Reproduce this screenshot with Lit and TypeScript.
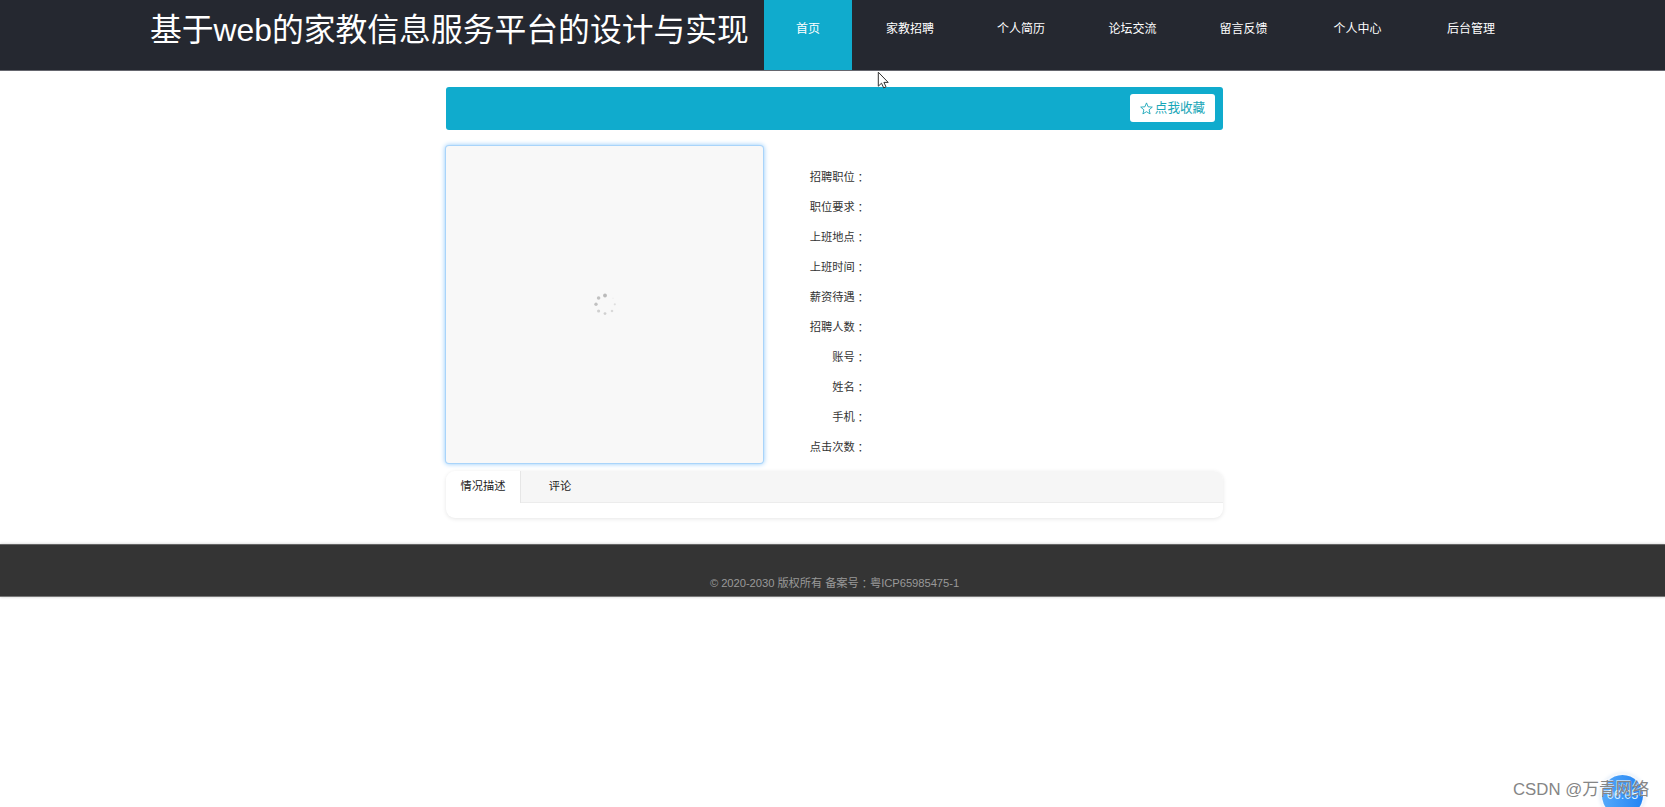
import { LitElement, html, css, svg } from "lit";
import { customElement } from "lit/decorators.js";
import { classMap } from "lit/directives/class-map.js";

const NAV = ["首页", "家教招聘", "个人简历", "论坛交流", "留言反馈", "个人中心", "后台管理"];
const FIELDS = ["招聘职位", "职位要求", "上班地点", "上班时间", "薪资待遇", "招聘人数", "账号", "姓名", "手机", "点击次数"];
// x, y, radius, opacity of each spinner dot
const DOTS: number[][] = [
  [12, 2.5, 1.9, 0.25], [5.6, 5, 1.8, 0.22], [3, 11.3, 1.7, 0.22], [5.6, 18, 1.6, 0.16],
  [12, 20.6, 1.4, 0.16], [19, 18, 1.3, 0.12], [21.8, 11.3, 1.1, 0.1], [20, 5.2, 0.8, 0.04],
];

@customElement("app-root")
export class AppRoot extends LitElement {
  static styles = css`
    :host {
      display: block;
      position: relative;
      height: 807px;
      overflow: hidden;
      background: #fff;
      color: #333;
      font-family: "Liberation Sans", "Noto Sans CJK SC", sans-serif;
      font-size: 11.25px;
    }
    * { box-sizing: border-box; }
    .header {
      display: flex;
      height: 71px;
      padding-left: 150px;
      background: #252830;
      border-bottom: 1px solid #65666e;
      color: #fff;
    }
    .title {
      width: 614px;
      font-size: 31.8px;
      line-height: 60px;
      white-space: nowrap;
    }
    .nav {
      display: grid;
      grid-template-columns: 88px 116px 106px 117px 105px 123px 104px;
      height: 70px;
      font-size: 12px;
      line-height: 58px;
      text-align: center;
    }
    .active { background: #10abcd; }
    .main { width: 777px; margin: 16px 0 0 446px; }
    .banner {
      display: flex;
      justify-content: flex-end;
      height: 43px;
      padding: 7px 8px 0 0;
      border-radius: 3px;
      background: #10abcd;
    }
    .fav {
      display: flex;
      align-items: center;
      justify-content: center;
      gap: 2px;
      width: 85px;
      height: 28px;
      border-radius: 3px;
      background: #fff;
      color: #18a6b8;
      font-size: 12.6px;
      line-height: 18px;
    }
    .detail { display: flex; margin-top: 16px; height: 317px; }
    .photo {
      display: flex;
      align-items: center;
      justify-content: center;
      width: 317px;
      height: 317px;
      border-radius: 3px;
      background: #f8f8f8;
      box-shadow: 0 0 0 1px #a9d4fa, 0 0 5px 1px #8fc8fa;
    }
    .fields { width: 103px; padding-top: 16px; text-align: right; }
    .row { height: 30px; line-height: 30px; white-space: nowrap; }
    .colon {
      display: inline-block;
      width: 11.25px;
      height: 11px;
      line-height: 13px;
      font-family: "Noto Sans CJK TC", sans-serif;
      vertical-align: -1px;
    }
    .card {
      height: 47px;
      margin-top: 8px;
      border-radius: 9px;
      overflow: hidden;
      background: #fff;
      box-shadow: 0 1px 4px rgba(0, 0, 0, 0.1);
    }
    .tabs {
      display: flex;
      height: 32px;
      line-height: 30px;
      background: #f6f6f6;
      border-bottom: 1px solid #ececec;
      color: #222;
      text-align: center;
    }
    .tab { width: 78px; }
    .current { width: 75px; height: 32px; background: #fff; border-right: 1px solid #e6e6e6; }
    .footer {
      height: 53px;
      margin-top: 26px;
      padding-top: 26px;
      padding-left: 4px;
      line-height: 25px;
      background: #343434;
      border-top: 1px solid #666;
      border-bottom: 1px solid #777;
      box-shadow: 0 0 3px rgba(0, 0, 0, 0.2);
      color: #999;
      letter-spacing: -0.07px;
      text-align: center;
    }
    .cursor { position: absolute; left: 877px; top: 71px; }
    .clock {
      position: absolute;
      left: 1602px;
      top: 775px;
      width: 41px;
      height: 41px;
      border-radius: 50%;
      background: linear-gradient(90deg, #54a9fa, #2384f3);
      box-shadow: 0 0 0 2px #f2f7fd, 0 0 4px 2px #dde8f5;
      color: #d9efff;
      font-size: 12.5px;
      line-height: 41px;
      text-align: center;
    }
    .mark {
      position: absolute;
      left: 1513px;
      top: 777px;
      font-size: 16.8px;
      line-height: 26px;
      white-space: nowrap;
      color: #858585;
      text-shadow: -1px -1px 0 rgba(255, 255, 255, 0.6);
    }
  `;

  render() {
    return html`
      <header class="header">
        <div class="title">基于web的家教信息服务平台的设计与实现</div>
        <nav class="nav">
          ${NAV.map((t, i) => html`<div class=${classMap({ active: i === 0 })}>${t}</div>`)}
        </nav>
      </header>
      <main class="main">
        <div class="banner">
          <div class="fav">
            <svg width="13" height="13" viewBox="0 0 13 13" fill="none" stroke="#18a6b8" stroke-width="0.9">
              <path d="M6.5 .9 8.1 4.8 12.3 5.1 9.1 7.8 10.1 11.9 6.5 9.7 2.9 11.9 3.9 7.8 .7 5.1 4.9 4.8Z" />
            </svg>
            <span>点我收藏</span>
          </div>
        </div>
        <section class="detail">
          <div class="photo">
            <svg width="23" height="23" viewBox="0 0 23 23">
              ${DOTS.map(([x, y, r, o]) => svg`<circle cx=${x} cy=${y} r=${r} fill-opacity=${o} />`)}
            </svg>
          </div>
          <div class="fields">
            ${FIELDS.map((f) => html`<div class="row">${f}<span class="colon">：</span></div>`)}
          </div>
        </section>
        <section class="card">
          <div class="tabs">
            <div class="tab current">情况描述</div>
            <div class="tab">评论</div>
          </div>
        </section>
      </main>
      <footer class="footer">© 2020-2030 版权所有 备案号<span class="colon">：</span>粤ICP65985475-1</footer>
      <svg class="cursor" width="13" height="19" viewBox="0 0 13 19">
        <path d="M1.3 1.2V15.2L4.5 12.2 6.7 16.9 9 15.8 6.9 11.4H11.2Z" fill="#fff" stroke="#333" />
      </svg>
      <div class="clock">06:05</div>
      <div class="mark">CSDN @万青网络</div>
    `;
  }
}
